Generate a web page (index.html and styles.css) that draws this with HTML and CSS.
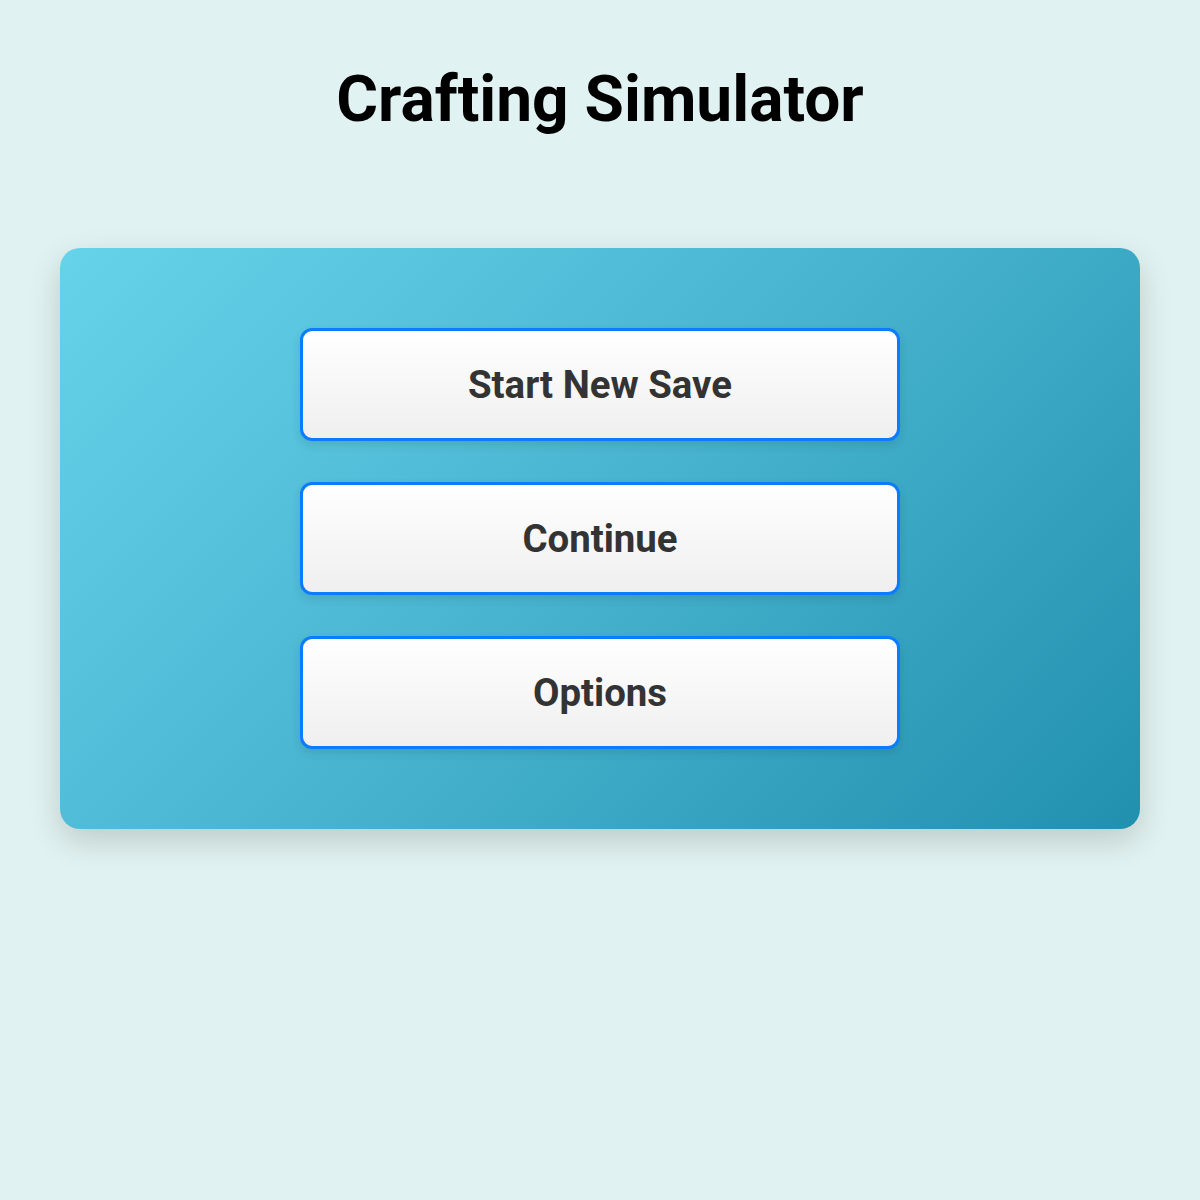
FILE: index.html
```html
<!DOCTYPE html>
<html lang="en">
<head>
    <meta charset="UTF-8">
    <meta name="viewport" content="width=device-width, initial-scale=1.0">
    <title>Crafting Simulator</title>
    <link rel="stylesheet" href="styles.css">
</head>
<body>
    <div id="container">
        <h1>Crafting Simulator</h1>
        <div id="menu">
            <button class="menu-button">Start New Save</button>
            <button class="menu-button">Continue</button>
            <button class="menu-button">Options</button>
        </div>
    </div>
</body>
</html>
```

FILE: styles.css
```css
html, body {
    margin: 0;
    padding: 0;
    min-height: 100vh;
    background-color: #e0f2f1;
    font-family: Roboto, "Liberation Sans", sans-serif;
}

#container {
    display: flex;
    flex-direction: column;
    align-items: center;
    padding: 60px 60px 120px;
}

h1 {
    margin: 0;
    font-size: 64px;
    line-height: 80px;
    font-weight: 700;
    color: #000;
}

#menu {
    align-self: stretch;
    margin-top: 108px;
    padding: 80px 0;
    display: flex;
    flex-direction: column;
    align-items: center;
    gap: 41px;
    border-radius: 20px;
    background: linear-gradient(135deg, #67d3ea 0%, #47b3cf 50%, #2190ae 100%);
    box-shadow: 0 12px 32px rgba(0, 0, 0, 0.16);
}

.menu-button {
    width: 600px;
    height: 113px;
    border: 3px solid #0a7cff;
    border-radius: 12px;
    background: linear-gradient(180deg, #ffffff, #efeff0);
    box-shadow: 0 4px 10px rgba(0, 0, 0, 0.1);
    font-family: Roboto, "Liberation Sans", sans-serif;
    font-size: 38.4px;
    font-weight: 700;
    color: #333;
    cursor: pointer;
}
```
